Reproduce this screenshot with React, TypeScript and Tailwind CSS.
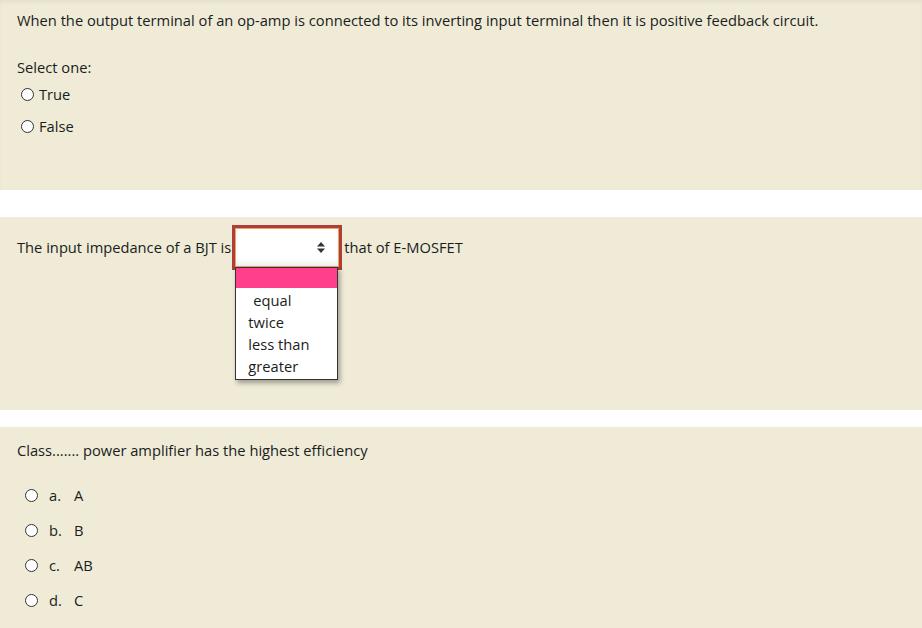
import React from "react"

const font = { fontFamily: "'Open Sans', 'Noto Sans', sans-serif" }

function Radio({ className = "" }: { className?: string }) {
  return <span className={"inline-block w-[13px] h-[13px] rounded-full border-[1.5px] border-[#333] bg-white " + className} />
}

export default function App() {
  const options = [
    { k: "a.", v: "A" },
    { k: "b.", v: "B" },
    { k: "c.", v: "AB" },
    { k: "d.", v: "C" },
  ]

  return (
    <div className="w-[922px] h-[628px] bg-white text-[14.7px] text-[#1a1d21] overflow-hidden" style={font}>
      {/* question 1 */}
      <div className="h-[190px] bg-[#efebd7] shadow-[inset_0_3px_3px_rgba(0,0,0,0.04)] px-[17px] pt-[10px]">
        <p className="leading-[20px]">
          When the output terminal of an op-amp is connected to its inverting input terminal then it is positive feedback circuit.
        </p>
        <p className="mt-[27px] leading-[20px]">Select one:</p>
        <div className="mt-[7px] flex flex-col gap-[12px] pl-[4px]">
          <label className="flex items-center gap-[5px] leading-[20px]">
            <Radio /> True
          </label>
          <label className="flex items-center gap-[5px] leading-[20px]">
            <Radio /> False
          </label>
        </div>
      </div>

      {/* question 2 */}
      <div className="mt-[27px] h-[193px] bg-[#efebd7] px-[17px] pt-[8px]">
        <div className="flex items-center leading-[20px]">
          <span className="-mt-[1px]">The input impedance of a BJT is</span>
          <div className="relative ml-[1px]">
            <div className="w-[110px] h-[45px] border-[3px] border-[#b03d38] bg-white">
              <div className="h-full border border-[#e0a860] flex items-center justify-end pr-[13px] shadow-[inset_0_-4px_4px_rgba(0,0,0,0.06)]">
                <svg width="8" height="11" viewBox="0 0 8 11">
                  <path d="M4 0 L8 4.5 L0 4.5 Z" fill="#333" />
                  <path d="M4 11 L8 6.5 L0 6.5 Z" fill="#333" />
                </svg>
              </div>
            </div>
            <div className="absolute left-[3px] top-[42px] w-[103px] bg-white border border-[#333] shadow-[2px_3px_5px_rgba(0,0,0,0.35)] z-10">
              <div className="h-[20px] bg-[#ff3e8c]" />
              <div className="pl-[12px] pt-[1px] pb-[2px] leading-[22px]">
                <div className="pl-[5px]">equal</div>
                <div>twice</div>
                <div>less than</div>
                <div>greater</div>
              </div>
            </div>
          </div>
          <span className="ml-[2px] -mt-[1px]">that of E-MOSFET</span>
        </div>
      </div>

      {/* question 3 */}
      <div className="mt-[17px] h-[202px] bg-[#efebd7] px-[17px] pt-[13px]">
        <p className="leading-[20px]">Class....... power amplifier has the highest efficiency</p>
        <div className="mt-[25px] flex flex-col gap-[15px] pl-[8px]">
          {options.map((o) => (
            <label key={o.k} className="flex items-center leading-[20px]">
              <Radio />
              <span className="ml-[11px] w-[25px]">{o.k}</span>
              <span>{o.v}</span>
            </label>
          ))}
        </div>
      </div>
    </div>
  )
}
